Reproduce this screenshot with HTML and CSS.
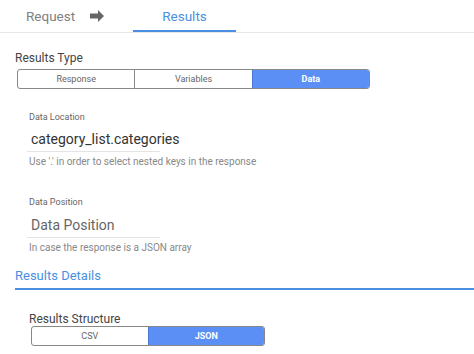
FILE: index.html
```html
<!DOCTYPE html>
<html lang="en">
<head>
<meta charset="UTF-8">
<title>Results</title>
<link rel="stylesheet" href="styles.css">
</head>
<body>
  <div class="tabs">
    <div class="tab tab-request">
      <span>Request</span>
      <svg class="arrow" width="14" height="12" viewBox="0 0 14 12">
        <path d="M0 3.5H8V0L14 6L8 12V8.5H0Z" fill="#666"/>
      </svg>
    </div>
    <div class="tab tab-active">Results</div>
  </div>

  <div class="section">
    <div class="section-label">Results Type</div>
    <div class="segmented seg-type">
      <div class="seg">Response</div>
      <div class="seg">Variables</div>
      <div class="seg seg-on">Data</div>
    </div>
  </div>

  <div class="field field-first">
    <div class="field-label">Data Location</div>
    <div class="field-input">category_list.categories</div>
    <div class="field-help">Use '.' in order to select nested keys in the response</div>
  </div>

  <div class="field">
    <div class="field-label">Data Position</div>
    <div class="field-input placeholder">Data Position</div>
    <div class="field-help">In case the response is a JSON array</div>
  </div>

  <div class="details-title">Results Details</div>

  <div class="structure">
    <div class="section-label">Results Structure</div>
    <div class="segmented seg-structure">
      <div class="seg">CSV</div>
      <div class="seg seg-on">JSON</div>
    </div>
  </div>
</body>
</html>
```

FILE: styles.css
```css
body {
  margin: 0;
  font-family: Roboto, "Liberation Sans", Arial, sans-serif;
  background-color: #fff;
  color: #333;
}

.tabs {
  display: flex;
  height: 32px;
  border-bottom: 1px solid #e8e8e8;
}

.tab {
  height: 32px;
  box-sizing: border-box;
  display: flex;
  align-items: center;
  font-size: 13.5px;
}

.tab-request {
  padding-left: 26px;
  width: 133px;
  color: #808080;
}

.arrow {
  margin-left: 15px;
}

.tab-active {
  width: 103px;
  justify-content: center;
  color: #4a90e2;
  border-bottom: 2px solid #4a90e2;
  padding-top: 2px;
}

.section {
  padding-left: 15px;
  margin-top: 18px;
}

.section-label {
  font-size: 12px;
  line-height: 14px;
  color: #444;
}

.segmented {
  display: flex;
  margin-top: 4px;
  margin-left: 2px;
  height: 20px;
  box-sizing: border-box;
  border: 1px solid #888;
  border-radius: 3px;
  overflow: hidden;
}

.seg-type {
  width: 353px;
}

.seg-structure {
  width: 234px;
  margin-top: 0;
}

.seg {
  flex: 1;
  display: flex;
  align-items: center;
  justify-content: center;
  font-size: 9px;
  color: #666;
  border-left: 1px solid #888;
}

.seg:first-child {
  border-left: none;
}

.seg-on {
  background-color: #5b8ff5;
  color: #fff;
  font-weight: bold;
  border-left-color: #4a78d0;
}

.field {
  padding-left: 29px;
  margin-top: 28px;
}

.field-first {
  margin-top: 22px;
}

.field-label {
  font-size: 9px;
  line-height: 12px;
  color: #666;
}

.field-input {
  margin: 6px 0 0 -2px;
  width: 129px;
  padding: 0 0 1px 4px;
  font-size: 14px;
  line-height: 21px;
  color: #333;
  border-bottom: 1px solid #e4e4e4;
}

.placeholder {
  color: #666;
  margin-top: 7px;
}

.field-help {
  margin-top: 4px;
  font-size: 10px;
  line-height: 12px;
  color: #888;
}

.details-title {
  margin: 14px 0 0 15px;
  font-size: 13px;
  line-height: 16px;
  color: #4a90e2;
  padding-bottom: 4px;
  border-bottom: 2px solid #4a90e2;
}

.structure {
  padding-left: 29px;
  margin-top: 22px;
}
```
